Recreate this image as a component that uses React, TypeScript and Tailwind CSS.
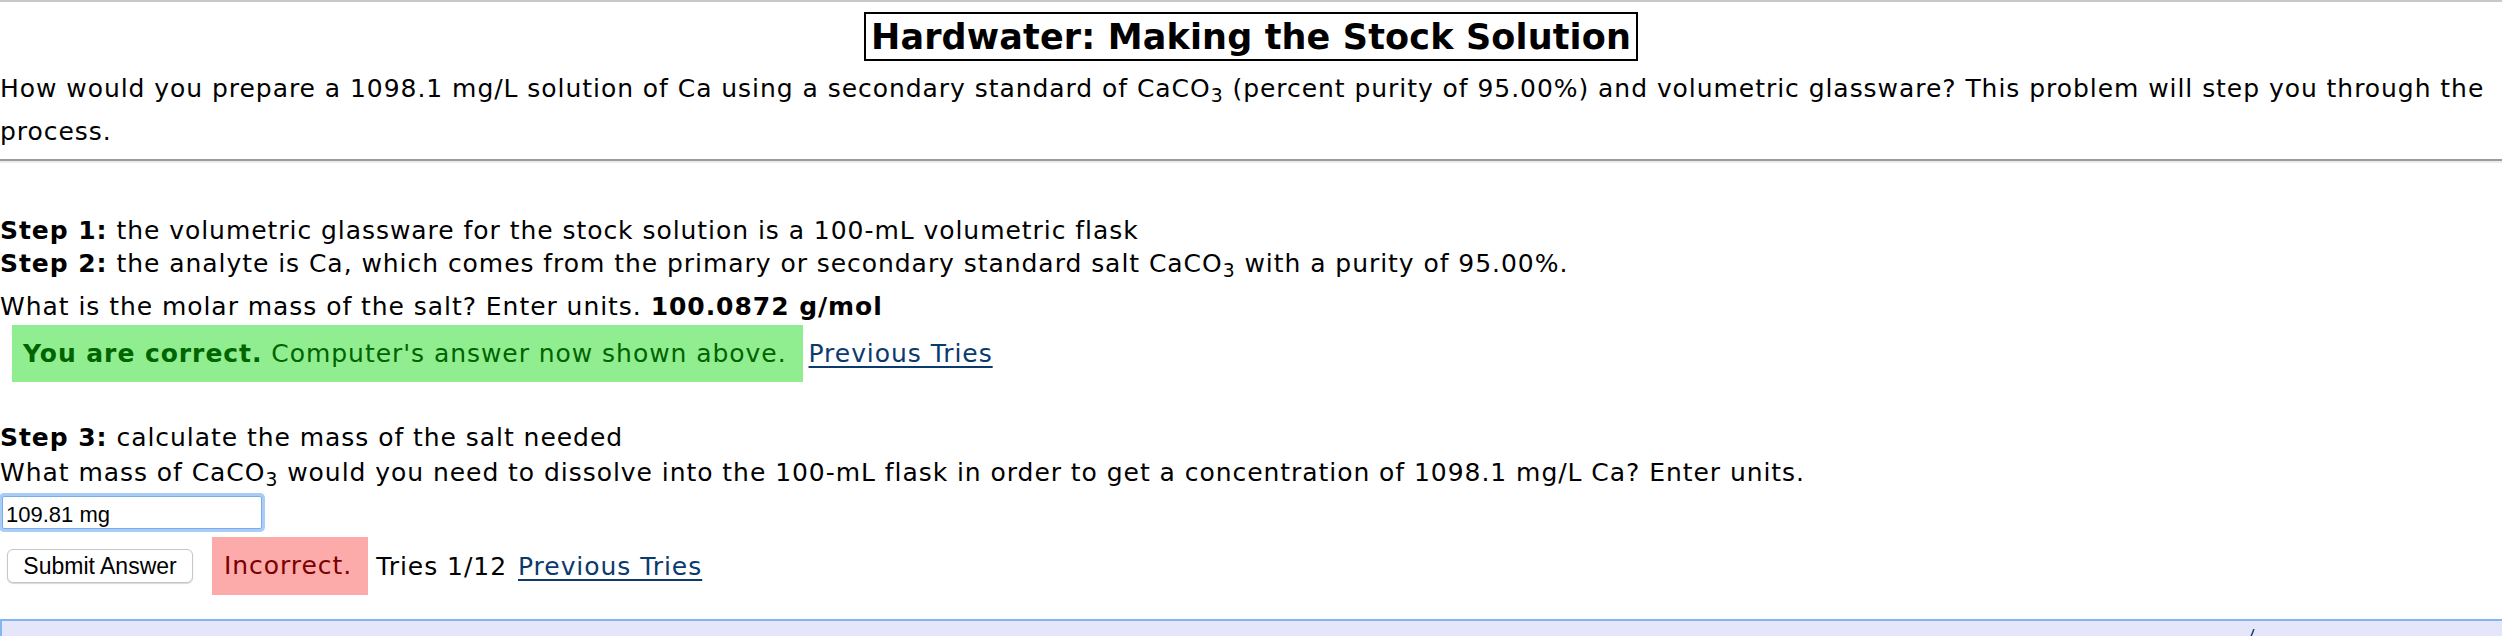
export default function App() {
  return (
    <div className="min-h-screen bg-white text-black font-['DejaVu_Sans','Verdana',sans-serif]">
      <div className="h-[2px] bg-[#c8c8c8]" />

      <div className="flex justify-center pt-[10px]">
        <h1 className="border-2 border-black px-[5px] pt-[3px] pb-[1px] text-[35px] leading-[41px] font-bold tracking-[0.15px]">
          Hardwater: Making the Stock Solution
        </h1>
      </div>

      <div className="text-[25px] tracking-[0.95px]">
        <p className="mt-[6px] leading-[43px]">
          <span className="whitespace-nowrap">
            How would you prepare a 1098.1 mg/L solution of Ca using a secondary standard of CaCO<sub>3</sub> (percent
            purity of 95.00%) and volumetric glassware? This problem will step you through the
          </span>
          <br />
          process.
        </p>

        <div className="mt-[6px] h-[4px] border-t-2 border-b-2 border-t-[#9b9b9b] border-b-[#ececec]" />

        <div className="leading-[33px]">
          <div className="mt-[51px]">
            <b>Step 1:</b> the volumetric glassware for the stock solution is a 100-mL volumetric flask
          </div>
          <div>
            <b>Step 2:</b> the analyte is Ca, which comes from the primary or secondary standard salt CaCO<sub>3</sub>{' '}
            with a purity of 95.00%.
          </div>
          <div className="mt-[10px]">
            What is the molar mass of the salt? Enter units. <b>100.0872 g/mol</b>
          </div>

          <div className="mt-[2px] flex items-baseline">
            <span className="ml-[12px] bg-[#90ee90] py-3 pl-[11px] pr-[16px] text-[#006400]">
              <b>You are correct.</b> Computer's answer now shown above.
            </span>
            <a href="#" className="ml-[6px] text-[#0a3a6e] underline underline-offset-[4px]">
              Previous Tries
            </a>
          </div>

          <div className="mt-[39px]">
            <b>Step 3:</b> calculate the mass of the salt needed
          </div>
          <div className="mt-[2px]">
            What mass of CaCO<sub>3</sub> would you need to dissolve into the 100-mL flask in order to get a
            concentration of 1098.1 mg/L Ca? Enter units.
          </div>

          <input
            readOnly
            value="109.81 mg"
            className="mt-[7px] ml-[2px] block h-[33px] w-[260px] rounded-[2px] border border-[#79acef] bg-white pl-[3px] pt-[3px] font-['Liberation_Sans',Arial,sans-serif] text-[22px] tracking-normal text-black outline-none ring-[3px] ring-[#a9cdf6]"
          />

          <div className="mt-[8px] flex items-center">
            <button className="ml-[7px] h-[34px] w-[186px] rounded-[6px] border border-[#c6c6c6] bg-white font-['Liberation_Sans',Arial,sans-serif] text-[23px] leading-none tracking-normal text-black shadow-[0_1px_1px_rgba(0,0,0,0.15)]">
              Submit Answer
            </button>
            <span className="ml-[19px] bg-[#fcaaaa] py-3 pl-3 pr-4 leading-[34px] text-[#7a0000]">Incorrect.</span>
            <span className="ml-[8px]">Tries 1/12</span>
            <a href="#" className="ml-[11px] text-[#0a3a6e] underline underline-offset-[4px]">
              Previous Tries
            </a>
          </div>
        </div>
      </div>

      <div className="mt-[24px] flex h-[40px] border-t-2 border-l-2 border-[#80b6f2] bg-[#e6e6fa]">
        <svg className="ml-auto mr-[247px] mt-[8px]" width="6" height="10" viewBox="0 0 6 10">
          <line x1="5" y1="0" x2="1" y2="10" stroke="#1d3f73" strokeWidth="1.5" />
        </svg>
      </div>
    </div>
  )
}
